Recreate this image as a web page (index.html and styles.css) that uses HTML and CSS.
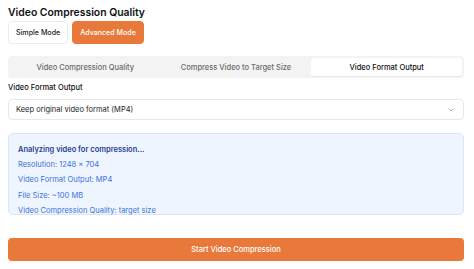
FILE: index.html
```html
<!DOCTYPE html>
<html lang="en">
<head>
    <meta charset="UTF-8">
    <title>Video Compression Quality</title>
    <link rel="stylesheet" href="styles.css">
</head>
<body>
<div class="page">
    <h1 class="title">Video Compression Quality</h1>
    <div class="modes">
        <button class="mode">Simple Mode</button>
        <button class="mode active">Advanced Mode</button>
    </div>
    <div class="tabs">
        <span class="tab">Video Compression Quality</span>
        <span class="tab">Compress Video to Target Size</span>
        <span class="tab current">Video Format Output</span>
    </div>
    <label class="label">Video Format Output</label>
    <div class="select">
        <span>Keep original video format (MP4)</span>
        <svg class="chev" width="8" height="8" viewBox="0 0 24 24"><path d="M6 9l6 6 6-6" fill="none" stroke="#9ca3af" stroke-width="2.5" stroke-linecap="round" stroke-linejoin="round"/></svg>
    </div>
    <div class="info">
        <p class="info_head">Analyzing video for compression...</p>
        <p>Resolution: 1248 × 704</p>
        <p>Video Format Output: MP4</p>
        <p>File Size: ~100 MB</p>
        <p>Video Compression Quality: target size</p>
    </div>
    <button class="start">Start Video Compression</button>
</div>
</body>
</html>
```

FILE: styles.css
```css
*{box-sizing:border-box;}
body{margin:0;padding:0 10px 0 8px;font-family:Inter,"Noto Sans",sans-serif;color:#111827;background:#fff;}
.page{display:flex;flex-direction:column;width:456px;}
.title{margin:5px 0 0;font-size:10.4px;font-weight:600;line-height:16px;color:#111;}
.modes{display:flex;gap:4px;margin-top:0;}
.mode{height:23px;padding:0 7px;border:1px solid #ececec;border-radius:4px;background:#fff;font-family:inherit;font-size:7.1px;font-weight:500;color:#222;}
.mode.active{background:#e8793a;border-color:#e8793a;color:#fff;}
.tabs{display:flex;margin-top:12px;height:22px;padding:2px;background:#f3f3f4;border-radius:4px;}
.tab{flex:1;display:flex;align-items:center;justify-content:center;font-size:7.5px;font-weight:500;color:#6b6b6b;border-radius:3px;}
.tab.current{background:#fff;color:#111;box-shadow:0 1px 1px rgba(0,0,0,.04);}
.label{margin-top:4px;font-size:7.5px;font-weight:500;line-height:12px;color:#111;}
.select{display:flex;align-items:center;justify-content:space-between;margin-top:5px;height:21px;padding:0 8px 0 7px;border:1px solid #e8e8e8;border-radius:4px;font-size:7.5px;color:#222;}
.chev{margin-top:1px;}
.info{margin-top:13px;height:82px;padding:8px 9px 0;background:#eff5ff;border:1px solid #d7e5fb;border-radius:5px;}
.info p{margin:0;font-size:7.5px;line-height:15.2px;color:#3b73d9;}
.info p.info_head{font-weight:600;color:#27408f;}
.start{margin-top:23px;height:23px;border:0;border-radius:4px;background:#e8793a;font-family:inherit;font-size:7.5px;font-weight:500;color:#fff;}
```
